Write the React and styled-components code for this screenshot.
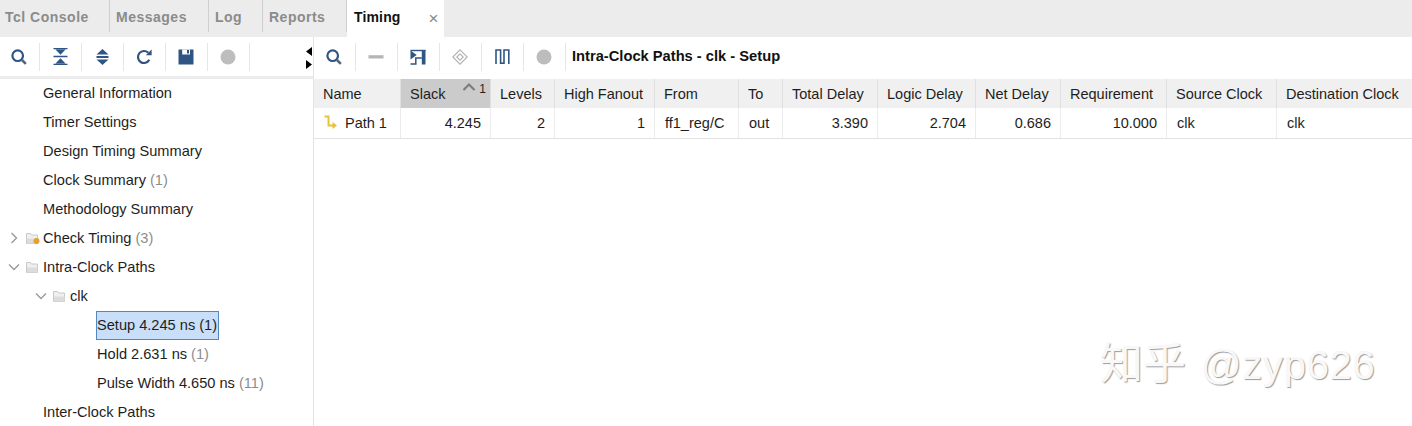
import React from "react";
import styled, { createGlobalStyle } from "styled-components";

const GlobalStyle = createGlobalStyle`
  html, body {
    margin: 0;
    padding: 0;
    background: #fff;
    font-family: "Liberation Sans", Arial, sans-serif;
  }
`;

const Page = styled.div`
  position: relative;
  width: 1412px;
  height: 426px;
  overflow: hidden;
  background: #fff;
  color: #1e1e1e;
`;

const TabBar = styled.div`
  display: flex;
  height: 37px;
  background: #ececec;
`;

const Tab = styled.div`
  display: flex;
  align-items: center;
  box-sizing: border-box;
  width: ${(p) => p.$w}px;
  height: ${(p) => (p.$active ? 37 : 32)}px;
  padding: ${(p) => (p.$active ? "0 0 4px 7px" : "2px 0 0 6px")};
  background: ${(p) => (p.$active ? "#fff" : "transparent")};
  border-right: ${(p) => (p.$active ? "0" : "1px solid #cfcfcf")};
  font-size: 14px;
  font-weight: bold;
  letter-spacing: ${(p) => (p.$active ? 0.15 : 0.5)}px;
  color: ${(p) => (p.$active ? "#111" : "#8b8b8b")};
  &:first-child {
    padding-left: 5px;
  }
`;

const CloseMark = styled.span`
  margin-left: 28px;
  margin-top: 5px;
  font-size: 17px;
  font-weight: normal;
  color: #888;
`;

const Body = styled.div`
  display: flex;
  height: 389px;
`;

const LeftPane = styled.div`
  box-sizing: border-box;
  width: 314px;
  flex: none;
  border-right: 1px solid #e4e4e4;
`;

const RightPane = styled.div`
  flex: 1;
  min-width: 0;
`;

const Toolbar = styled.div`
  position: relative;
  display: flex;
  align-items: center;
  box-sizing: border-box;
  height: 42px;
  border-bottom: ${(p) => (p.$left ? "3px solid #ececec" : "0")};
  padding-bottom: ${(p) => (p.$left ? 0 : 3)}px;
`;

const ToolCell = styled.div`
  display: flex;
  align-items: center;
  justify-content: center;
  box-sizing: border-box;
  width: ${(p) => (p.$first ? 40 : 42)}px;
  height: 28px;
  padding-right: 1px;
  border-right: 1px solid #e6e6e6;
`;

const PaneTitle = styled.div`
  margin-left: 6px;
  padding-bottom: 1px;
  font-size: 14.7px;
  font-weight: bold;
  color: #111;
`;

const Arrows = styled.div`
  position: absolute;
  right: 1px;
  top: 10px;
  display: flex;
  flex-direction: column;
  gap: 4px;
`;

const Tree = styled.div`
  display: flex;
  flex-direction: column;
`;

const TreeRow = styled.div`
  display: flex;
  align-items: center;
  box-sizing: border-box;
  height: 29px;
  padding-left: ${(p) => p.$indent}px;
  padding-bottom: 2px;
  font-size: 14.6px;
  white-space: nowrap;
`;

const Caret = styled.span`
  display: flex;
  align-items: center;
  justify-content: center;
  width: 14px;
  margin-right: 4px;
`;

const FolderSlot = styled.span`
  display: flex;
  width: 16px;
  margin-right: 2px;
`;

const Count = styled.span`
  margin-left: 4px;
  color: #8d8d8d;
`;

const Selected = styled.span`
  display: flex;
  align-items: center;
  box-sizing: border-box;
  height: 29px;
  margin: 2px 0 0 -1px;
  padding: 0 1px 2px 0;
  background: #c9dff9;
  border: 1px solid #5288bf;
`;

const columns = "87px 90px 64px 100px 84px 44px 95px 98px 85px 106px 110px 1fr";

const HeadRow = styled.div`
  display: grid;
  grid-template-columns: ${columns};
  height: 29px;
  background: #f0f0f0;
`;

const HeadCell = styled.div`
  position: relative;
  display: flex;
  align-items: center;
  box-sizing: border-box;
  padding-left: 9px;
  padding-top: 1px;
  font-size: 14.5px;
  white-space: nowrap;
  border-right: 1px solid #e0e0e0;
  background: ${(p) => (p.$sorted ? "#cbcbcb" : "transparent")};
  &:last-child {
    border-right: 0;
  }
`;

const SortMark = styled.span`
  position: absolute;
  right: 4px;
  top: 3px;
  display: flex;
  align-items: flex-start;
  gap: 3px;
  font-size: 12px;
`;

const DataRow = styled.div`
  display: grid;
  grid-template-columns: ${columns};
  height: 31px;
  border-bottom: 1px solid #e2e2e2;
  box-sizing: border-box;
`;

const DataCell = styled.div`
  display: flex;
  align-items: center;
  justify-content: ${(p) => (p.$right ? "flex-end" : "flex-start")};
  box-sizing: border-box;
  padding: ${(p) => (p.$right ? "0 9px 1px 0" : "0 0 1px 10px")};
  font-size: 14.5px;
  white-space: nowrap;
  border-right: 1px solid #ececec;
  &:last-child {
    border-right: 0;
  }
`;

const PathIcon = styled.span`
  display: flex;
  margin-left: -1px;
  margin-right: 7px;
`;

const Watermark = styled.div`
  position: absolute;
  left: 1100px;
  top: 335px;
  font-family: "Liberation Sans", "Noto Sans CJK SC", sans-serif;
  font-size: 40px;
  line-height: 50px;
  letter-spacing: 0.7px;
  white-space: nowrap;
  color: #f8f8f8;
  text-shadow: 1px 1px 1px #9c9c9c;
`;

const WatermarkHan = styled.span`
  font-family: "Noto Sans CJK SC", sans-serif;
  font-size: 43px;
  letter-spacing: 0;
  margin-right: 15px;
`;

const navy = "#2f5584";

const SearchIcon = () => (
  <svg width="16" height="16" viewBox="0 0 16 16">
    <circle cx="6.700" cy="6.700" r="5.300" fill="none" stroke={navy} strokeWidth="2.200" />
    <path d="M11 11 L14.800 14.800" stroke="#55657a" strokeWidth="2.600" />
  </svg>
);

const CollapseIcon = () => (
  <svg width="15" height="17" viewBox="0 0 15 17" fill={navy}>
    <path d="M0.500 0h14v1.200H0.500zM2.500 1.500h10L7.500 6.800zM0.500 7.700h14v1.600H0.500zM7.500 10.200l5 5.300h-10zM0.500 15.800h14V17H0.500z" />
  </svg>
);

const ExpandIcon = () => (
  <svg width="13" height="16" viewBox="0 0 13 16" fill={navy}>
    <path d="M6.500 0l6 5.400H0.500zM0.500 7h12v2H0.500zM0.500 10.600h12L6.500 16z" />
  </svg>
);

const RefreshIcon = () => (
  <svg width="16" height="16" viewBox="0 0 16 16">
    <path d="M13.300 10.800A6 6 0 1 1 12.300 3.800" fill="none" stroke="#33527c" strokeWidth="2.200" />
    <path d="M9.800 6.200h5.800V0.400z" fill="#33527c" />
  </svg>
);

const SaveIcon = () => (
  <svg width="16" height="16" viewBox="0 0 16 16">
    <path d="M0.500 0.500h15v15h-15z" fill={navy} />
    <path d="M4.200 0.500h7.800v5H4.200z" fill="#fff" />
    <path d="M9 1h2v3.500H9z" fill={navy} />
  </svg>
);

const DotIcon = () => (
  <svg width="16" height="16" viewBox="0 0 16 16">
    <circle cx="8" cy="8" r="7.500" fill="#bdbdbd" />
  </svg>
);

const DashIcon = () => (
  <svg width="16" height="16" viewBox="0 0 16 16">
    <path d="M0.500 6.200h15v3.300H0.500z" fill="#b5b5b5" />
  </svg>
);

const RouteIcon = () => (
  <svg width="16" height="16" viewBox="0 0 16 16" fill="none">
    <path d="M0.500 1.500h15" stroke={navy} strokeWidth="1.400" />
    <path d="M0.500 1.500l6.200 4.500-6.200 4.500z" fill={navy} />
    <path d="M11.800 1h3.700v14.500h-3.700z" fill={navy} />
    <path d="M0.500 15h5.300V9h6" stroke={navy} strokeWidth="1.500" />
  </svg>
);

const DiamondIcon = () => (
  <svg width="16" height="16" viewBox="0 0 16 16" fill="none" stroke="#b4b4b4">
    <path d="M8 0.800L15.200 8 8 15.200 0.800 8z" strokeWidth="1.200" />
    <path d="M8 4.800L11.200 8 8 11.200 4.800 8z" strokeWidth="1.200" />
  </svg>
);

const PulseIcon = () => (
  <svg width="15" height="15" viewBox="0 0 15 15" fill="none" stroke={navy} strokeWidth="1.600">
    <path d="M1 15V1h4.600v14M9 15V1h4.800v14" />
    <path d="M5.600 14.200H9" />
  </svg>
);

const FolderIcon = ({ warn }) => (
  <svg width="16" height="14" viewBox="0 0 16 14">
    <path d="M1.500 2.500h4l1 1.500h6v8.500h-11z" fill="#efefef" stroke="#c9c9c9" />
    <path d="M2 7.500h10.500v5H2z" fill="#dcdcdc" />
    {warn && <circle cx="11.500" cy="10" r="3" fill="#e5a02f" />}
  </svg>
);

const ChevronRight = () => (
  <svg width="10" height="12" viewBox="0 0 10 12" fill="none" stroke="#9a9a9a" strokeWidth="1.400">
    <path d="M2.500 1l5 5-5 5" />
  </svg>
);

const ChevronDown = () => (
  <svg width="12" height="10" viewBox="0 0 12 10" fill="none" stroke="#9a9a9a" strokeWidth="1.400">
    <path d="M1 2.500l5 5 5-5" />
  </svg>
);

const SortUp = () => (
  <svg width="14" height="9" viewBox="0 0 14 9" fill="none" stroke="#7d7d7d" strokeWidth="2.200">
    <path d="M1.500 8L7 2.500 12.500 8" />
  </svg>
);

const PathGlyph = () => (
  <svg width="15" height="15" viewBox="0 0 15 15" fill="none">
    <path d="M1.500 1.500h4v9h5" stroke="#e6c23f" strokeWidth="2" />
    <path d="M9.500 7l4.500 3.500-4.500 3.500z" fill="#e6c23f" />
  </svg>
);

const TriangleLeft = () => (
  <svg width="6" height="9" viewBox="0 0 6 9">
    <path d="M6 0v9L0 4.500z" fill="#000" />
  </svg>
);

const TriangleRight = () => (
  <svg width="6" height="9" viewBox="0 0 6 9">
    <path d="M0 0v9l6-4.500z" fill="#000" />
  </svg>
);

const tabs = [
  { label: "Tcl Console", w: 110 },
  { label: "Messages", w: 99 },
  { label: "Log", w: 54 },
  { label: "Reports", w: 84 },
];

const leftTools = [SearchIcon, CollapseIcon, ExpandIcon, RefreshIcon, SaveIcon, DotIcon];
const rightTools = [SearchIcon, DashIcon, RouteIcon, DiamondIcon, PulseIcon, DotIcon];

const headers = [
  "Name",
  "Slack",
  "Levels",
  "High Fanout",
  "From",
  "To",
  "Total Delay",
  "Logic Delay",
  "Net Delay",
  "Requirement",
  "Source Clock",
  "Destination Clock",
];

const row = [
  ["4.245", true],
  ["2", true],
  ["1", true],
  ["ff1_reg/C", false],
  ["out", false],
  ["3.390", true],
  ["2.704", true],
  ["0.686", true],
  ["10.000", true],
  ["clk", false],
  ["clk", false],
];

export default function App() {
  return (
    <Page>
      <GlobalStyle />
      <TabBar>
        {tabs.map((t) => (
          <Tab key={t.label} $w={t.w}>
            {t.label}
          </Tab>
        ))}
        <Tab $active $w={97}>
          Timing
          <CloseMark>×</CloseMark>
        </Tab>
      </TabBar>
      <Body>
        <LeftPane>
          <Toolbar $left>
            {leftTools.map((Icon, i) => (
              <ToolCell key={i} $first={i === 0}>
                <Icon />
              </ToolCell>
            ))}
            <Arrows>
              <TriangleLeft />
              <TriangleRight />
            </Arrows>
          </Toolbar>
          <Tree>
            <TreeRow $indent={43}>General Information</TreeRow>
            <TreeRow $indent={43}>Timer Settings</TreeRow>
            <TreeRow $indent={43}>Design Timing Summary</TreeRow>
            <TreeRow $indent={43}>
              Clock Summary<Count>(1)</Count>
            </TreeRow>
            <TreeRow $indent={43}>Methodology Summary</TreeRow>
            <TreeRow $indent={7}>
              <Caret>
                <ChevronRight />
              </Caret>
              <FolderSlot>
                <FolderIcon warn />
              </FolderSlot>
              Check Timing<Count>(3)</Count>
            </TreeRow>
            <TreeRow $indent={7}>
              <Caret>
                <ChevronDown />
              </Caret>
              <FolderSlot>
                <FolderIcon />
              </FolderSlot>
              Intra-Clock Paths
            </TreeRow>
            <TreeRow $indent={34}>
              <Caret>
                <ChevronDown />
              </Caret>
              <FolderSlot>
                <FolderIcon />
              </FolderSlot>
              clk
            </TreeRow>
            <TreeRow $indent={97}>
              <Selected>Setup 4.245 ns (1)</Selected>
            </TreeRow>
            <TreeRow $indent={97}>
              Hold 2.631 ns<Count>(1)</Count>
            </TreeRow>
            <TreeRow $indent={97}>
              Pulse Width 4.650 ns<Count>(11)</Count>
            </TreeRow>
            <TreeRow $indent={43}>Inter-Clock Paths</TreeRow>
          </Tree>
        </LeftPane>
        <RightPane>
          <Toolbar>
            {rightTools.map((Icon, i) => (
              <ToolCell key={i}>
                <Icon />
              </ToolCell>
            ))}
            <PaneTitle>Intra-Clock Paths - clk - Setup</PaneTitle>
          </Toolbar>
          <HeadRow>
            {headers.map((h) => (
              <HeadCell key={h} $sorted={h === "Slack"}>
                {h}
                {h === "Slack" && (
                  <SortMark>
                    <SortUp />1
                  </SortMark>
                )}
              </HeadCell>
            ))}
          </HeadRow>
          <DataRow>
            <DataCell>
              <PathIcon>
                <PathGlyph />
              </PathIcon>
              Path 1
            </DataCell>
            {row.map(([value, right], i) => (
              <DataCell key={i} $right={right}>
                {value}
              </DataCell>
            ))}
          </DataRow>
        </RightPane>
      </Body>
      <Watermark>
        <WatermarkHan>知乎</WatermarkHan>@zyp626
      </Watermark>
    </Page>
  );
}
